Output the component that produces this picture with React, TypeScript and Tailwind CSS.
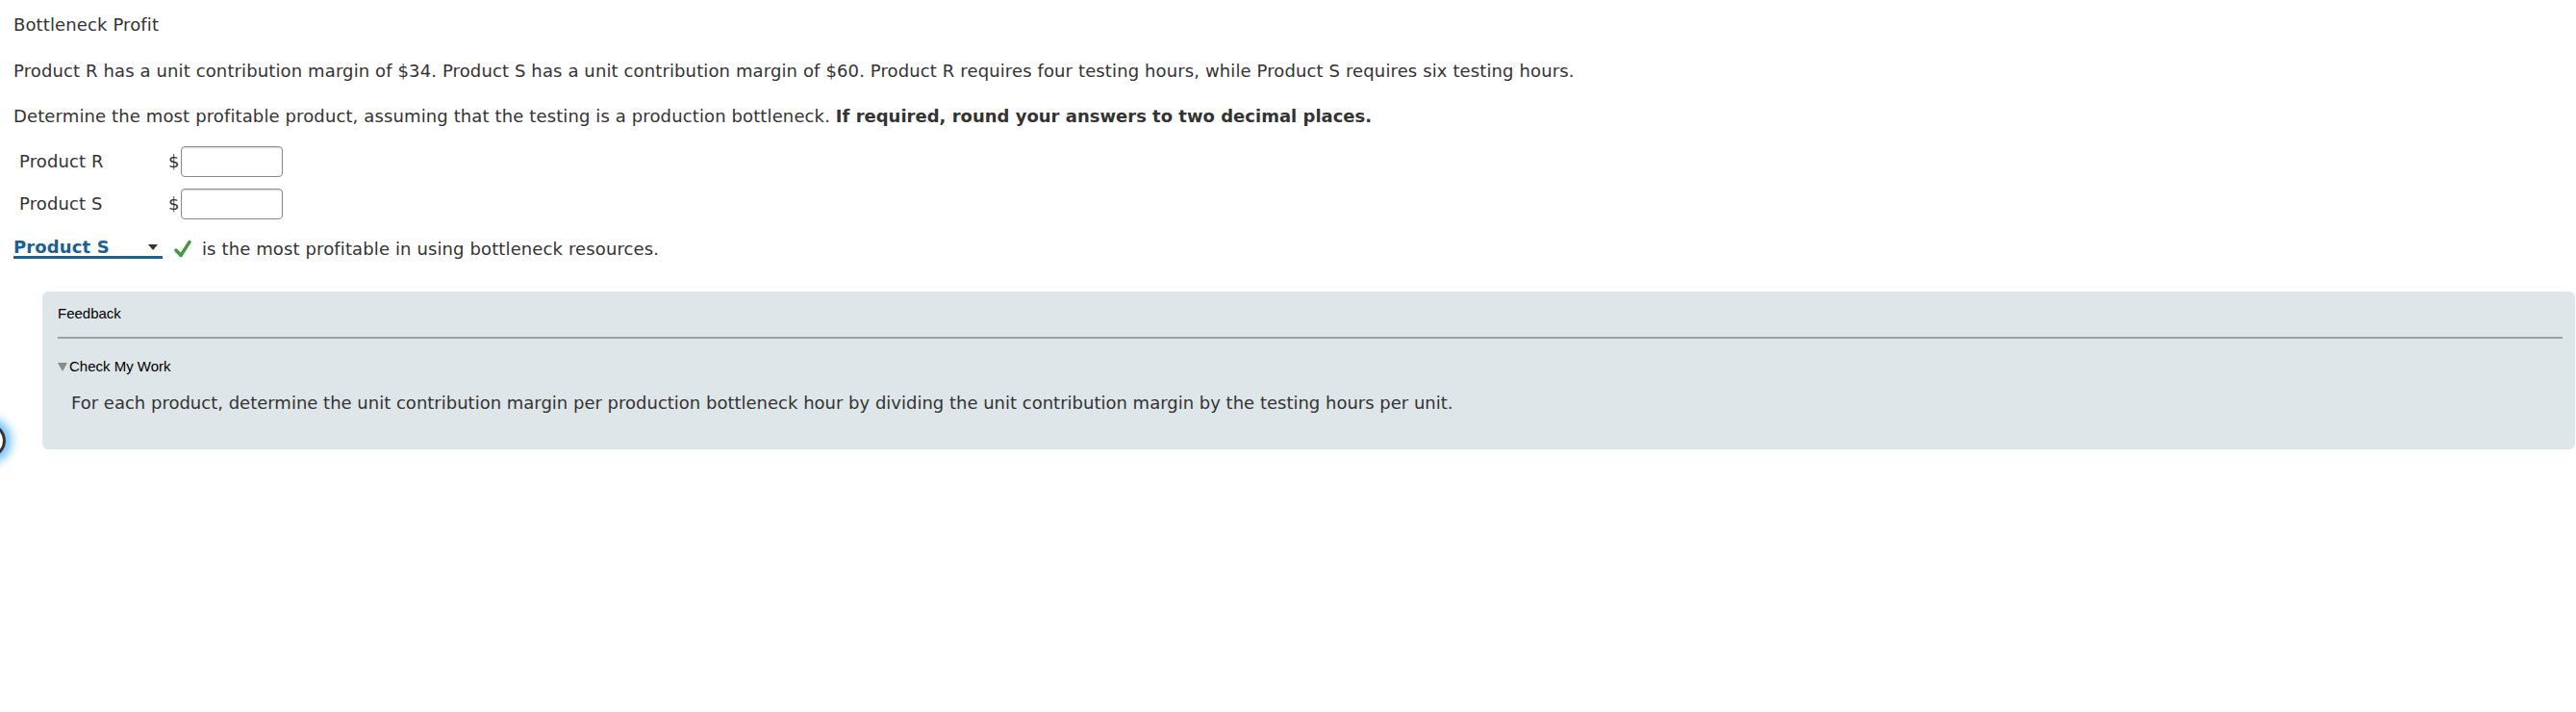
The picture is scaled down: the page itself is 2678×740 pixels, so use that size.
import React from 'react';

const FONT = { fontFamily: '"DejaVu Sans", Verdana, sans-serif' };
const ARIAL = { fontFamily: '"Liberation Sans", Arial, sans-serif' };

function AmountRow({ label }: { label: string }) {
  return (
    <div className="flex items-center h-[33px]">
      <div className="w-[161px] pl-[6px]">{label}</div>
      <span>$</span>
      <input
        type="text"
        className="w-[106px] h-[32px] ml-[1px] bg-white border border-[#8a8a8a] rounded-[4px] shadow-[inset_0_1px_2px_rgba(0,0,0,0.15)]"
      />
    </div>
  );
}

export default function App() {
  return (
    <div className="relative min-h-[740px] bg-white text-[#333] text-[18px] tracking-[0.12px] leading-[24px] pl-[14px] pr-[1px] pt-[14px]" style={FONT}>
      {/* focus ring poking in from the left edge */}
      <div className="absolute left-[-30px] top-[440px] w-[36px] h-[36px] rounded-full border-[3px] border-[#333] shadow-[0_0_10px_6px_rgba(56,170,255,0.7)]" />

      <div>Bottleneck Profit</div>

      <p className="mt-[24px]">
        Product R has a unit contribution margin of $34. Product S has a unit contribution margin of $60. Product R requires four testing hours, while Product S requires six testing hours.
      </p>

      <p className="mt-[23px]">
        Determine the most profitable product, assuming that the testing is a production bottleneck.{' '}
        <b className="tracking-normal">If required, round your answers to two decimal places.</b>
      </p>

      <div className="mt-[18px] flex flex-col gap-[11px]">
        <AmountRow label="Product R" />
        <AmountRow label="Product S" />
      </div>

      <div className="mt-[20px] flex items-center h-[21px]">
        <div className="relative w-[155px] h-[21px] bg-white rounded-t-[3px] border-b-[3px] border-[#1c5f93] flex items-center">
          <span className="font-bold text-[#1c5f93] leading-[18px]">Product S</span>
          <span className="absolute right-[5px] top-[6px] w-0 h-0 border-l-[5px] border-r-[5px] border-t-[6px] border-l-transparent border-r-transparent border-t-[#333]" />
        </div>
        <svg className="ml-[11px]" width="20" height="20" viewBox="0 0 20 20">
          <path d="M3 11 L8 16.5 L17 2.5" fill="none" stroke="#3f9a3f" strokeWidth="3.4" strokeLinecap="round" strokeLinejoin="round" />
        </svg>
        <span className="ml-[10px]">is the most profitable in using bottleneck resources.</span>
      </div>

      <div className="mt-[34px] ml-[30px] bg-[#dfe6e9] rounded-[6px] pt-[15px] pl-[16px] pr-[13px] pb-[36px]">
        <div className="text-[15px] leading-[16px] tracking-normal text-black" style={ARIAL}>Feedback</div>
        <div className="mt-[16px] h-[2px] bg-[#9ba1a4]" />
        <div className="mt-[21px] flex items-center text-[15px] leading-[16px] tracking-normal text-black" style={ARIAL}>
          <span className="w-0 h-0 border-l-[5px] border-r-[5px] border-t-[9px] border-l-transparent border-r-transparent border-t-[#8a8a8a] mr-[2px]" />
          Check My Work
        </div>
        <p className="mt-[18px] pl-[14px] tracking-normal text-[#333]">
          For each product, determine the unit contribution margin per production bottleneck hour by dividing the unit contribution margin by the testing hours per unit.
        </p>
      </div>
    </div>
  );
}
